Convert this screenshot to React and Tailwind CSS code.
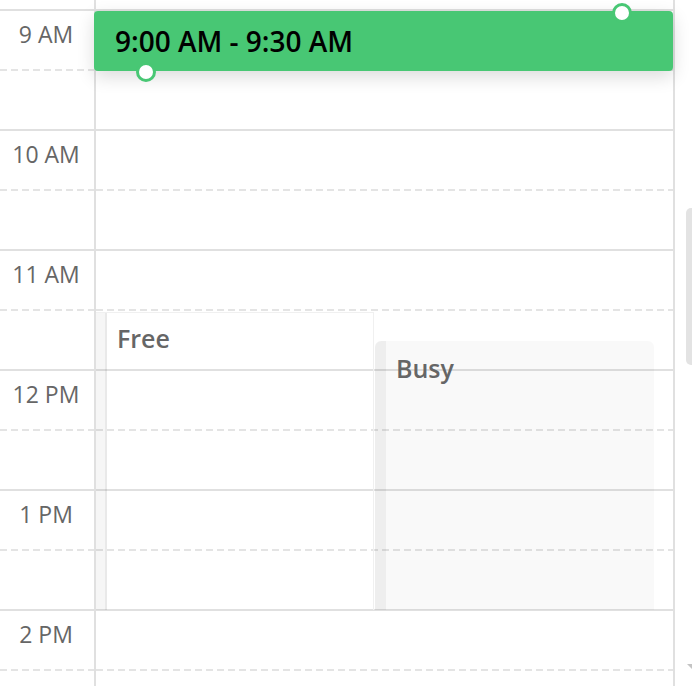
import React from 'react'

const hours = ['9 AM', '10 AM', '11 AM', '12 PM', '1 PM', '2 PM']

function Dashed() {
  return (
    <div className="h-[2px] bg-[image:repeating-linear-gradient(to_right,#e4e4e4_0_7px,transparent_7px_11px)]" />
  )
}

function Handle({ className }) {
  return (
    <div className={`absolute w-[20px] h-[20px] rounded-full bg-white border-[3px] border-[#48c774] ${className}`} />
  )
}

export default function App() {
  return (
    <div className="w-[692px] h-[696px] bg-white overflow-hidden font-['Open_Sans',sans-serif]">
      <div className="relative h-[686px] overflow-hidden flex">
        {/* time labels */}
        <div className="w-[94px] shrink-0">
          <div className="h-[9px]" />
          {hours.map((h) => (
            <div key={h} className="h-[120px] border-t-2 border-[#e0e0e0] flex flex-col">
              <div className="h-[58px] pt-[8px] pr-[2px] text-center text-[23px] leading-[30px] text-[#666]">
                {h}
              </div>
              <Dashed />
              <div className="h-[58px]" />
            </div>
          ))}
        </div>

        {/* day column */}
        <div className="w-[581px] shrink-0 border-x-2 border-[#e0e0e0]">
          <div className="h-[9px]" />
          {hours.map((h) => (
            <div key={h} className="h-[120px] border-t-2 border-[#e0e0e0] flex flex-col">
              <div className="h-[58px]" />
              <Dashed />
              <div className="h-[58px]" />
            </div>
          ))}
        </div>

        {/* scrollbar gutter */}
        <div className="flex-1 flex flex-col">
          <div className="ml-[11px] mt-[208px] w-[10px] h-[157px] rounded-[5px] bg-[#e3e3e3]" />
          <div className="ml-[12px] mt-[299px] w-0 h-0 border-l-[5px] border-r-[5px] border-t-[5px] border-transparent border-t-[#c4c4c4]" />
        </div>

        {/* Free block */}
        <div className="absolute left-[96px] top-[312px] w-[278px] h-[298px] flex border-t border-r border-[#f0f0f0]">
          <div className="w-[11px] shrink-0 bg-[rgba(0,0,0,0.035)] border-r-2 border-[rgba(0,0,0,0.05)]" />
          <div className="pl-[10px] pt-[9px] text-[25px] leading-[32px] font-semibold text-[#666]">Free</div>
        </div>

        {/* Busy block */}
        <div className="absolute left-[375px] top-[341px] w-[279px] h-[269px] flex rounded-t-[6px] overflow-hidden bg-[rgba(0,0,0,0.025)]">
          <div className="w-[11px] shrink-0 bg-[rgba(0,0,0,0.045)]" />
          <div className="pl-[10px] pt-[11px] text-[25px] leading-[32px] font-semibold text-[#666]">Busy</div>
        </div>

        {/* selected event */}
        <div className="absolute left-[94px] top-[11px] w-[579px] h-[60px] rounded-[4px] bg-[#48c774] shadow-[0_6px_18px_rgba(0,0,0,0.14)] flex items-center pl-[21px]">
          <span className="text-[28px] leading-[34px] font-semibold text-black">9:00 AM - 9:30 AM</span>
        </div>
        <Handle className="left-[612px] top-[3px]" />
        <Handle className="left-[136px] top-[62px]" />
      </div>
    </div>
  )
}
